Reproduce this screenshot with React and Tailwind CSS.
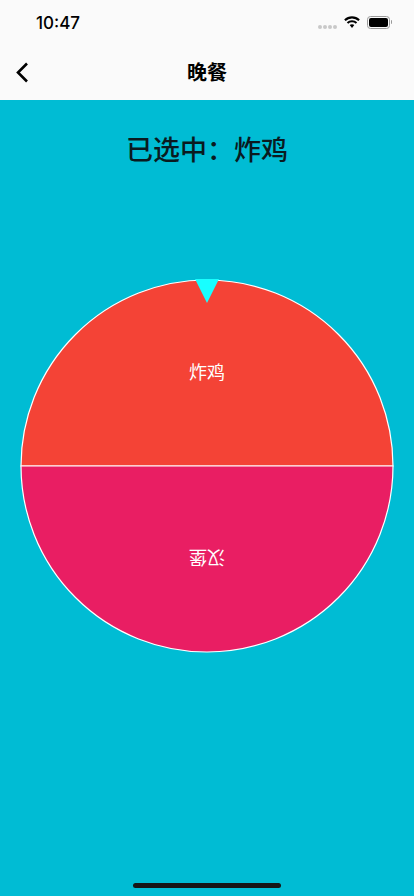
import React from 'react';

const font = { fontFamily: '"Noto Sans CJK SC", sans-serif' };

const StatusBar = () => (
  <div className="flex h-[44px] items-center justify-between pl-[36px] pr-[22px]">
    <span className="pt-[2px] text-[17px] font-medium leading-none text-black [font-family:Inter,sans-serif]">10:47</span>
    <div className="flex items-center">
      <div className="mr-[7px] mt-[10px] flex gap-[1px]">
        <span className="h-[4px] w-[4px] rounded-full bg-[#c8c8c8]" />
        <span className="h-[4px] w-[4px] rounded-full bg-[#c8c8c8]" />
        <span className="h-[4px] w-[4px] rounded-full bg-[#c8c8c8]" />
        <span className="h-[4px] w-[4px] rounded-full bg-[#c8c8c8]" />
      </div>
      <svg width="16" height="12" viewBox="0 0 16 12" className="mr-[7px]" fill="none" stroke="#000" strokeWidth="2.1">
        <path d="M.9 4.2a10.3 10.3 0 0 1 14.2 0" />
        <path d="M3.5 7a6.6 6.6 0 0 1 9 0" />
        <path d="M8 8.2c-.9 0-1.7.3-2.3.9L8 12l2.3-2.9c-.6-.6-1.4-.9-2.3-.9z" fill="#000" stroke="none" />
      </svg>
      <div className="flex items-center">
        <div className="h-[13px] w-[23px] rounded-[3.5px] border border-[#9a9a9a] p-[1px]">
          <div className="h-full w-full rounded-[2px] bg-black" />
        </div>
        <div className="ml-[1px] h-[4px] w-[1px] rounded-r-full bg-[#9a9a9a]" />
      </div>
    </div>
  </div>
);

const NavBar = () => (
  <div className="relative flex h-[56px] items-center justify-center">
    <button className="absolute left-[12px] top-[16px]">
      <svg width="20" height="24" viewBox="0 0 20 24" fill="none" stroke="#000" strokeWidth="2.6">
        <path d="M15 3.5 6 12.5l9 9" />
      </svg>
    </button>
    <h1 className="text-[20px] font-bold leading-none text-black" style={font}>晚餐</h1>
  </div>
);

const Wheel = () => (
  <div className="relative h-[374px] w-[374px]">
    <svg width="374" height="374" viewBox="0 0 374 374">
      <path d="M1 187a186 186 0 0 1 372 0z" fill="#f44336" stroke="#fff" strokeWidth="1.2" />
      <path d="M373 187a186 186 0 0 1-372 0z" fill="#e91e63" stroke="#fff" strokeWidth="1.2" />
      <text x="187" y="100" fill="#fff" fontSize="18" textAnchor="middle" style={font}>炸鸡</text>
      <text x="187" y="102" fill="#fff" fontSize="18" textAnchor="middle" transform="rotate(180 187 187)" style={font}>汉堡</text>
    </svg>
    <svg width="24" height="24" viewBox="0 0 24 24" className="absolute left-[175px] top-0">
      <path d="M0 0h24L12 24z" fill="#18ffff" />
    </svg>
  </div>
);

export default function App() {
  return (
    <div className="flex h-[896px] w-[414px] flex-col overflow-hidden bg-[#00bcd4]" style={font}>
      <header className="bg-[#fafafa]">
        <StatusBar />
        <NavBar />
      </header>
      <main className="flex flex-1 flex-col items-center">
        <h2 className="mt-[30px] text-[27px] font-medium leading-[38px] text-[#0a1a20]">已选中：炸鸡</h2>
        <div className="mt-[111px]">
          <Wheel />
        </div>
      </main>
      <div className="flex justify-center pb-[8px]">
        <div className="h-[5px] w-[148px] rounded-full bg-[#161616]" />
      </div>
    </div>
  );
}
